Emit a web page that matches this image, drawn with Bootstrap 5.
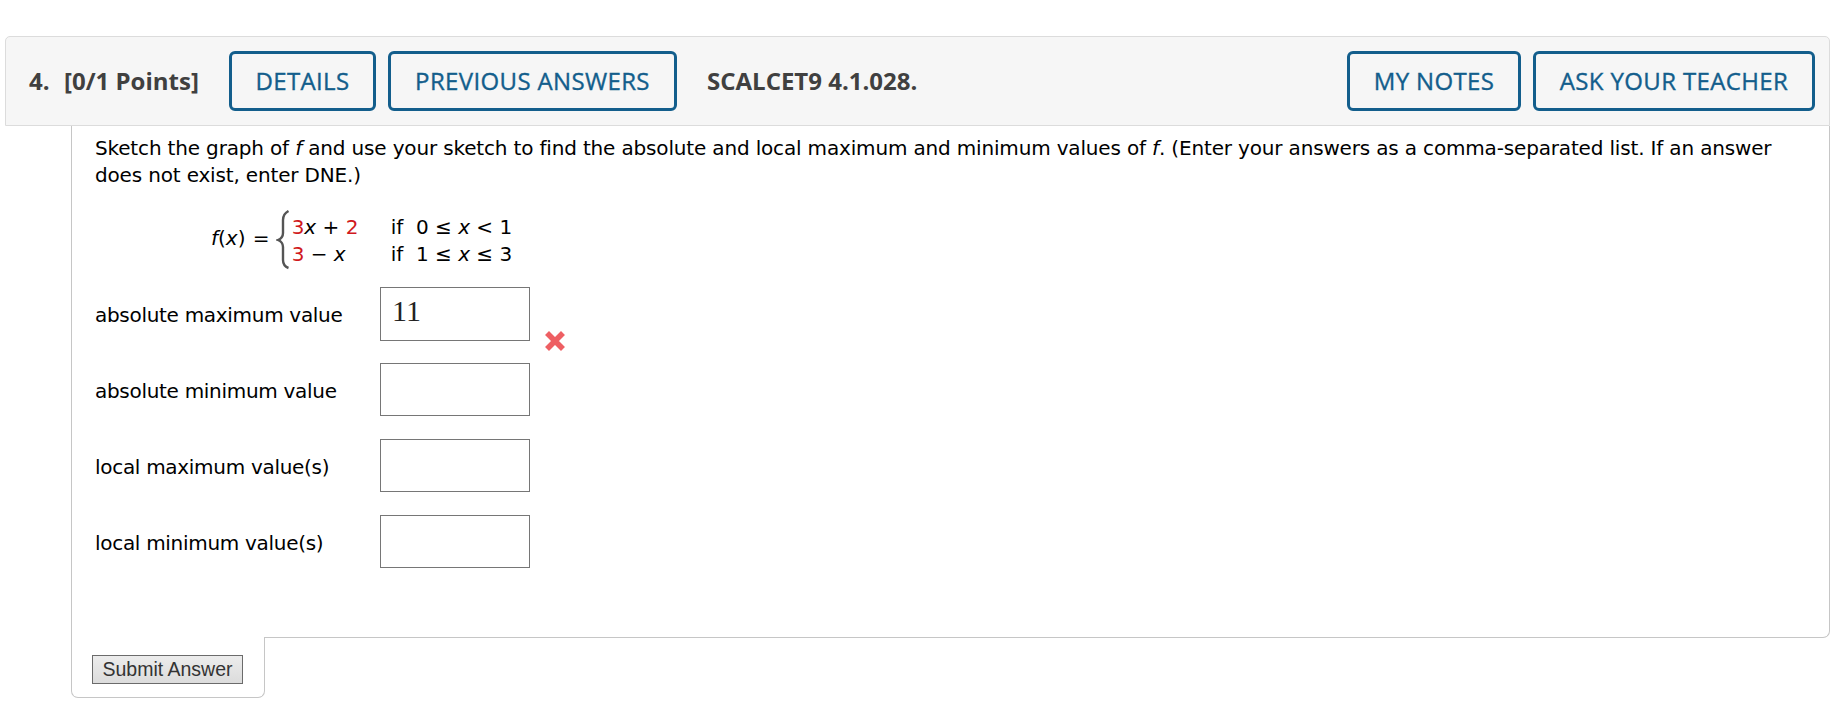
<!DOCTYPE html>
<html lang="en">
<head>
<meta charset="utf-8">
<meta name="viewport" content="width=device-width, initial-scale=1">
<title>SCALCET9 4.1.028.</title>
<link href="https://cdn.jsdelivr.net/npm/bootstrap@5.3.0/dist/css/bootstrap.min.css" rel="stylesheet">
<style>
body{font-family:"DejaVu Sans",sans-serif;font-size:20px;line-height:27px;color:#000;background:#fff;overflow:hidden}
.question{width:1825px;margin:36px 0 0 5px}
.q-head{height:90px;background:#f6f6f6;border:1px solid #dcdcdc;border-radius:5px 5px 0 0;padding:0 14px 0 23px;font-family:"Open Sans",sans-serif;font-size:24px;color:#404040}
.q-head strong{padding-bottom:2px}
.q-head .btn{--bs-btn-color:#135e8c;--bs-btn-border-color:#135e8c;--bs-btn-border-width:3px;--bs-btn-border-radius:6px;--bs-btn-font-size:24px;--bs-btn-font-family:"Open Sans",sans-serif;--bs-btn-font-weight:500;height:60px;padding:0;line-height:54px;letter-spacing:.36px;-webkit-text-stroke:.35px #135e8c}
.w-details{width:147px}.w-prev{width:289px;margin:0 30px 0 12px}.w-notes{width:174px}.w-ask{width:282px;margin-left:12px}
.q-num{width:35px}.q-points{width:165px}
.q-body{height:512px;margin-left:66px;border:1px solid #c6c6c6;border-top:0;border-radius:0 0 7px 0;padding:9px 22px 0 23px}
.prompt{letter-spacing:-.165px}
.formula{height:60px;margin:21px 0 0 116px}
.formula svg{margin:0 2px 0 6px}
.fx{padding-bottom:3px;word-spacing:1px}
.rows{padding-top:1px}
.red{color:#d01820}
.expr{width:99px}
.answers{display:grid;grid-template-columns:285px 150px auto;grid-auto-rows:54px;row-gap:22px;margin-top:17px;align-items:center}
.answers label{letter-spacing:-.3px;padding-top:2px}
.answers .form-control{width:150px;height:53px;align-self:start;border:1px solid #767676;border-radius:0;padding:0 11px 6px;font:30px "Liberation Serif",serif;color:#222}
.answers #a1{height:54px}
.wrong{align-self:end;margin:0 0 -11px 14px}
.q-tab{width:194px;height:61px;margin:-1px 0 0 66px;background:#fff;border:1px solid #c6c6c6;border-top:0;border-radius:0 0 7px 7px;padding:18px 0 0 20px}
.q-tab .btn{width:151px;height:29px;padding:0;border:1px solid #6b6b6b;border-radius:0;background:linear-gradient(#ececec,#dcdcdc);font:19.5px/27px "Liberation Sans",sans-serif;color:#333}
</style>
</head>
<body>
<main class="question">
  <header class="q-head d-flex align-items-center text-nowrap">
    <strong class="q-num">4.</strong>
    <strong class="q-points">[0/1 Points]</strong>
    <button class="btn btn-outline-primary w-details">DETAILS</button>
    <button class="btn btn-outline-primary w-prev">PREVIOUS ANSWERS</button>
    <strong class="q-code">SCALCET9 4.1.028.</strong>
    <button class="btn btn-outline-primary w-notes ms-auto">MY NOTES</button>
    <button class="btn btn-outline-primary w-ask">ASK YOUR TEACHER</button>
  </header>
  <section class="q-body text-nowrap">
    <div class="prompt">Sketch the graph of <i>f</i> and use your sketch to find the absolute and local maximum and minimum values of <i>f</i>. (Enter your answers as a comma-separated list. If an answer<br>does not exist, enter DNE.)</div>
    <div class="formula d-flex align-items-center">
      <span class="fx"><i>f</i>(<i>x</i>) =</span>
      <svg width="14" height="60" viewBox="0 0 14 60" fill="none" stroke="#555" stroke-width="2.4"><path d="M12.5 1Q7 4 7 10V23Q7 28 2 30Q7 32 7 37V50Q7 56 12.5 58"/></svg>
      <div class="expr rows"><div><span class="red">3</span><i>x</i> + <span class="red">2</span></div><div><span class="red">3</span> − <i>x</i></div></div>
      <div class="cond rows"><div>if&nbsp; 0 ≤ <i>x</i> &lt; 1</div><div>if&nbsp; 1 ≤ <i>x</i> ≤ 3</div></div>
    </div>
    <div class="answers">
      <label for="a1">absolute maximum value</label><input id="a1" class="form-control" value="11">
      <svg class="wrong" width="22" height="22" viewBox="0 0 22 22"><path d="M5 5L17 17M17 5L5 17" stroke="#ee5f63" stroke-width="5.6" stroke-linecap="square"/></svg>
      <label for="a2">absolute minimum value</label><input id="a2" class="form-control"><span></span>
      <label for="a3">local maximum value(s)</label><input id="a3" class="form-control"><span></span>
      <label for="a4">local minimum value(s)</label><input id="a4" class="form-control"><span></span>
    </div>
  </section>
  <div class="q-tab"><button class="btn">Submit Answer</button></div>
</main>
<script src="https://cdn.jsdelivr.net/npm/bootstrap@5.3.0/dist/js/bootstrap.bundle.min.js"></script>
</body>
</html>
